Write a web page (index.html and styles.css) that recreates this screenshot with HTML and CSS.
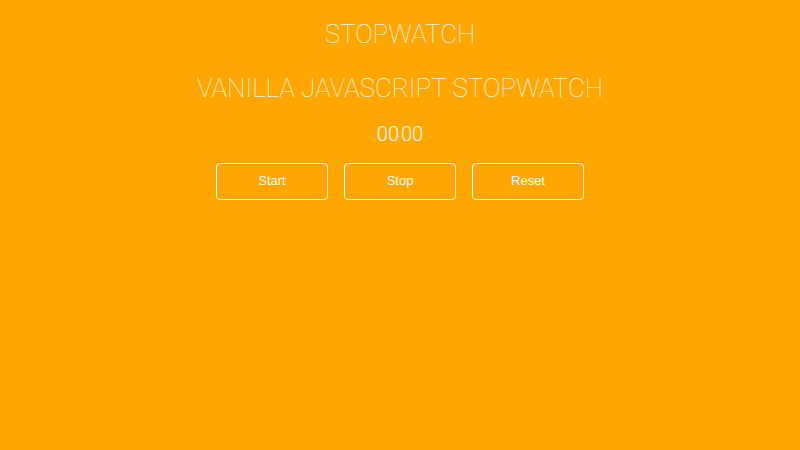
FILE: index.html
```html
<!DOCTYPE html>
<html lang="en">
<head>
<meta charset="utf-8">
<title>Stopwatch</title>
<link rel="stylesheet" href="styles.css">
</head>
<body>
<div class="wrapper">
  <h1 class="title">Stopwatch</h1>
  <h2 class="title">Vanilla JavaScript Stopwatch</h2>
  <p class="time"><span class="digits">00</span>:<span class="digits">00</span></p>
  <div class="controls">
    <button class="btn" type="button">Start</button>
    <button class="btn" type="button">Stop</button>
    <button class="btn" type="button">Reset</button>
  </div>
</div>
</body>
</html>
```
FILE: styles.css
```css
html, body {
  margin: 0;
  height: 100%;
}

body {
  background: #ffa600;
  font-family: "Liberation Sans", Arial, sans-serif;
  color: #fff;
}

.wrapper {
  display: flex;
  flex-direction: column;
  align-items: center;
  padding-top: 18px;
  text-align: center;
}

.title {
  margin: 0;
  font-family: Roboto, sans-serif;
  font-weight: 100;
  font-size: 26px;
  line-height: 32px;
  text-transform: uppercase;
}

h2.title {
  margin-top: 22px;
}

.time {
  margin: 19px 0 0;
  font-family: Roboto, sans-serif;
  font-weight: 300;
  font-size: 9px;
  line-height: 22px;
}

.digits {
  font-size: 20px;
}

.controls {
  display: flex;
  gap: 16px;
  margin-top: 14px;
}

.btn {
  width: 112px;
  height: 37px;
  padding: 0 0 2px;
  background: #ffa600;
  color: #fff;
  border: 1px solid #fff;
  border-radius: 4px;
  font-family: "Liberation Sans", Arial, sans-serif;
  font-size: 13px;
  cursor: pointer;
}
```
